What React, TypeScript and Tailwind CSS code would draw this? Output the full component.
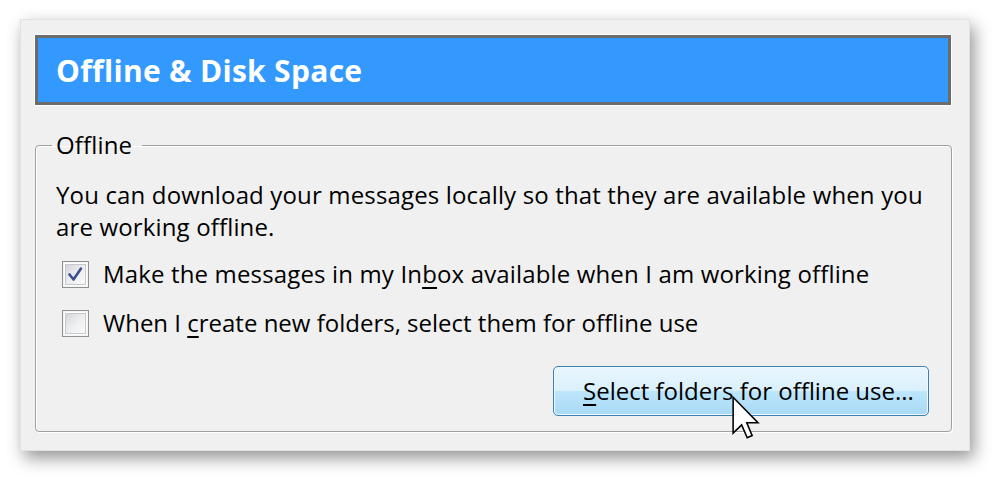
import React from "react";

function CheckBox({ checked }: { checked: boolean }) {
  return (
    <div className="w-[27px] h-[27px] shrink-0 border border-[#8e8f8f] bg-white p-[2px] shadow-[inset_0_0_0_1px_#f4f4f4]">
      <div className="relative w-full h-full border border-[#c6c8cc] bg-gradient-to-br from-[#d4d6da] via-[#eceef0] to-[#fafafa]">
        {checked && (
          <svg className="absolute inset-0" viewBox="0 0 19 19" width="19" height="19">
            <path
              d="M3.5 9.5 L7.5 14.5 L15 3.5"
              fill="none"
              stroke="#3d4f8e"
              strokeWidth="2.6"
              strokeLinecap="round"
              strokeLinejoin="round"
            />
          </svg>
        )}
      </div>
    </div>
  );
}

function Cursor() {
  return (
    <svg
      className="absolute left-[732px] top-[396px]"
      width="28"
      height="44"
      viewBox="0 0 12.5 19.5"
    >
      <path
        d="M0.5 0.5 L0.5 16.5 L4.3 12.8 L6.8 18.6 L9 17.6 L6.6 11.9 L11.6 11.9 Z"
        fill="#ffffff"
        stroke="#000000"
        strokeWidth="0.7"
        strokeLinejoin="miter"
      />
    </svg>
  );
}

export default function App() {
  return (
    <div
      className="relative w-[1000px] h-[481px] bg-white pt-[19px] pl-[20px] text-black"
      style={{ fontFamily: '"Open Sans", "Noto Sans", sans-serif' }}
    >
      <div className="w-[950px] h-[432px] bg-[#f0f0f0] border border-[#e2e2e2] shadow-[4px_7px_16px_rgba(0,0,0,0.42)] px-[14px] pt-[15px]">
        <div className="w-[916px] h-[70px] bg-[#3399ff] border-[3px] border-[#6c6c6c] shadow-[0_0_0_1px_#ffffff] flex items-center pl-[18px]">
          <span className="text-white font-bold text-[30px] tracking-[0.3px]">
            Offline &amp; Disk Space
          </span>
        </div>
        <fieldset className="mt-[26px] w-[917px] h-[301px] border border-[#a0a0a0] rounded-[4px] shadow-[inset_1px_1px_0_#ffffff,1px_1px_0_#ffffff] pl-[20px] pr-[22px]">
          <legend className="-ml-[4px] pl-[4px] pr-[10px] text-[24px] leading-[28px] tracking-[0.15px]">
            Offline
          </legend>
          <p className="pt-[20px] text-[24px] leading-[32px] tracking-[0.15px] whitespace-nowrap">
            You can download your messages locally so that they are available when you
            <br />
            are working offline.
          </p>
          <div className="mt-[11px] flex flex-col gap-[9px] pl-[6px]">
            <div className="h-[40px] flex items-center gap-[14px]">
              <CheckBox checked />
              <span className="text-[24px] tracking-[0.15px] whitespace-nowrap">
                Make the messages in my In<u className="underline-offset-4">b</u>ox available when I am working offline
              </span>
            </div>
            <div className="h-[40px] flex items-center gap-[14px]">
              <CheckBox checked={false} />
              <span className="text-[24px] tracking-[0px] whitespace-nowrap">
                When I <u className="underline-offset-4">c</u>reate new folders, select them for offline use
              </span>
            </div>
          </div>
          <div className="mt-[23px] flex justify-end">
            <button className="w-[376px] h-[50px] rounded-[5px] border border-[#3c7fb1] shadow-[inset_0_0_0_1px_#f0faff] bg-[linear-gradient(to_bottom,#eaf6fd_0%,#d9f0fc_50%,#bee6fd_50%,#a7d9f5_100%)] flex items-center pl-[29px] text-[24px] tracking-[0px] text-black whitespace-nowrap">
              <u className="underline-offset-4">S</u>elect folders for offline use...
            </button>
          </div>
        </fieldset>
      </div>
      <Cursor />
    </div>
  );
}
